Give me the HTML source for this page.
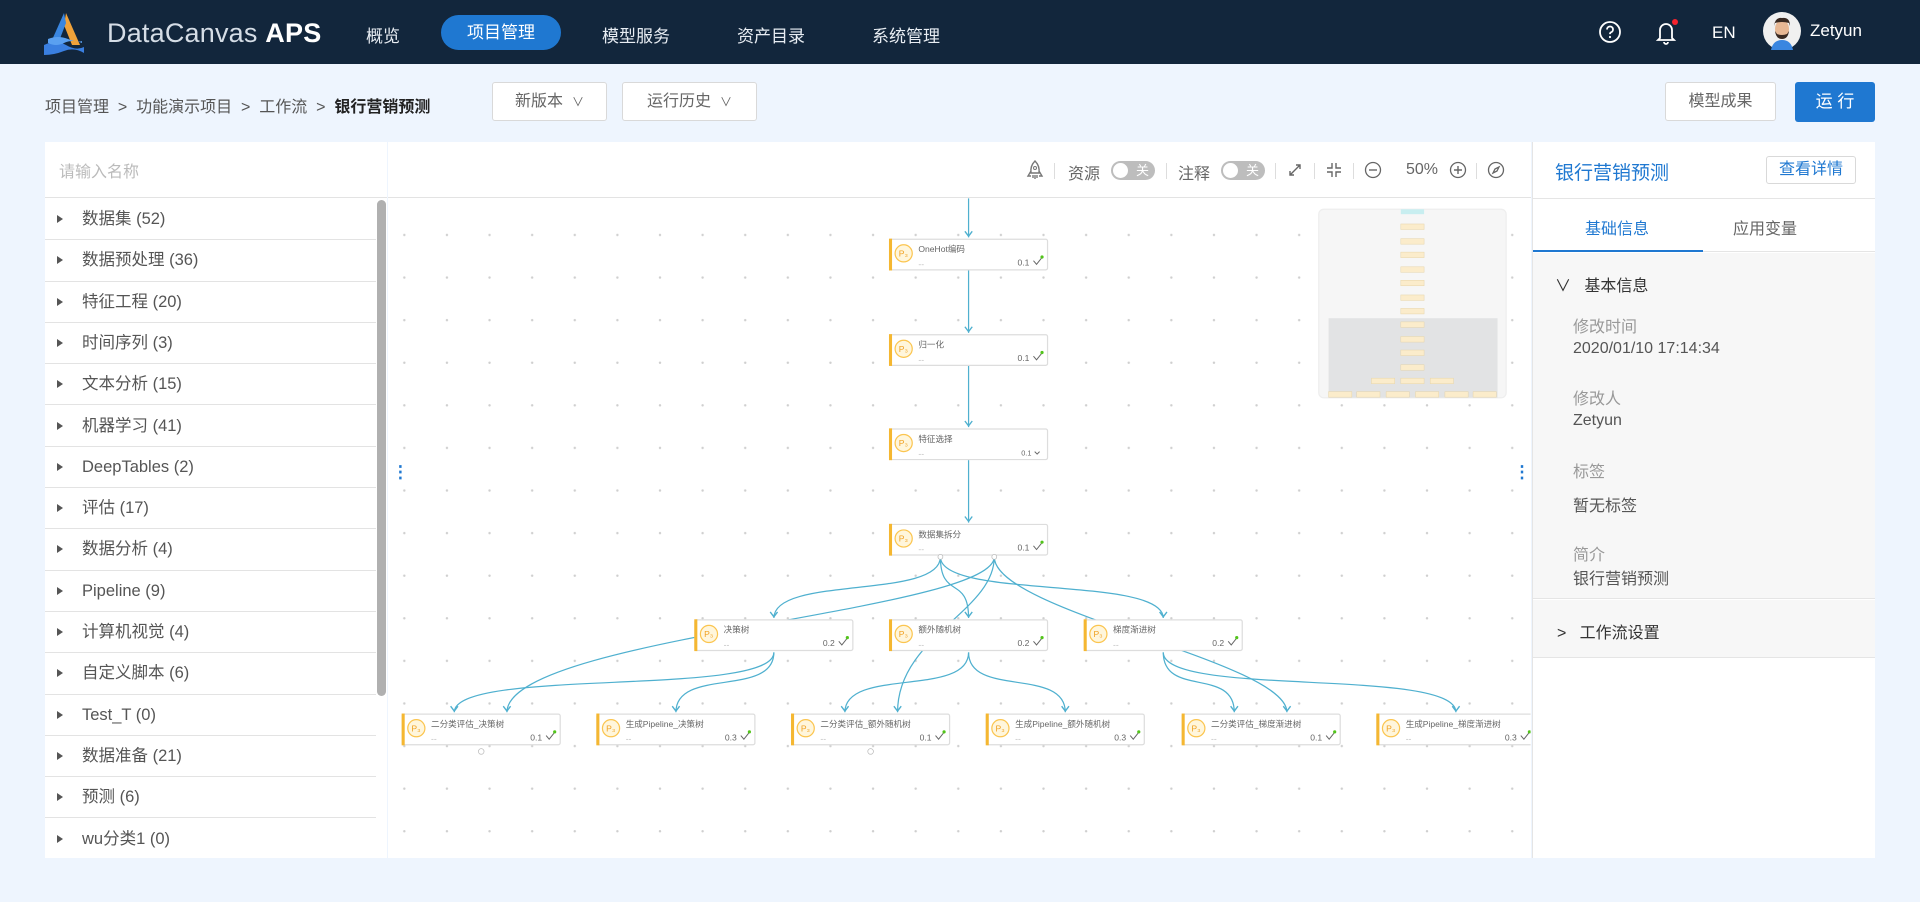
<!DOCTYPE html>
<html><head><meta charset="utf-8"><style>
*{box-sizing:border-box;margin:0;padding:0}
body{width:1920px;height:902px;background:#eef5fe;font-family:"Liberation Sans","Noto Sans CJK SC",sans-serif;position:relative;overflow:hidden;color:#333}
.abs{position:absolute}
.hdr{left:0;top:0;width:1920px;height:64px;background:#12263c}
.nav{color:#e8edf3;font-size:17px;top:22px}
.pill{left:441px;top:15px;width:120px;height:35px;border-radius:18px;background:#1f78d1;color:#fff;font-size:17px;text-align:center;line-height:35px}
.bc{top:93px;font-size:16px;color:#555}
.btn{background:#fff;border:1px solid #d9d9d9;border-radius:3px;font-size:16px;color:#666;text-align:center}
.left{left:45px;top:142px;width:342px;height:716px;background:#fff;overflow:hidden}
.item{position:absolute;left:0;width:331px;height:41.3px;border-bottom:1px solid #e3e3e3;font-size:16.5px;color:#555;line-height:41px;padding-left:37px}
.item:before{content:"";position:absolute;left:12px;top:16px;border-left:6px solid #555;border-top:4.5px solid transparent;border-bottom:4.5px solid transparent}
.canvas{left:388px;top:142px;width:1143px;height:716px;background:#fff}
.right{left:1532px;top:142px;width:343px;height:716px;background:#fff;border-left:1px solid #e5e5e5}
.tb{top:160px;font-size:16px;color:#666}
.tog{width:44px;height:19px;border-radius:10px;background:#bdbdbd;top:161px}
.tog:before{content:"";position:absolute;left:2px;top:2px;width:15px;height:15px;border-radius:50%;background:#fff}
.tog span{position:absolute;right:6px;top:0;font-size:13px;color:#fff;line-height:19px}
.sep{width:1px;height:16px;background:#ddd;top:163px}
.lbl{left:40px;font-size:16px;color:#999}
.val{left:40px;font-size:16px;color:#555}
</style></head><body>
<div class="abs hdr"></div>
<svg class="abs" style="left:44px;top:11px" width="40" height="45" viewBox="0 0 40 45">
<path d="M22 2 L36 34 L28 34 L20 14 Z" fill="#f0a23a"/>
<path d="M20 2 L4 38 L12 38 L22 12Z" fill="#3a86e0"/>
<path d="M0 34 Q12 28 22 34 T40 36 L40 42 Q30 36 20 40 T0 44Z" fill="#3a7fe0"/>
<path d="M4 28 Q14 24 24 28 T38 30 L38 32 Q28 28 20 32 T4 32Z" fill="#5aa0f0"/>
</svg>
<div class="abs" style="left:107px;top:18px;font-size:27px;color:#d5dde6;letter-spacing:0.2px">DataCanvas <b style="color:#fff">APS</b></div>
<div class="abs nav" style="left:366px">概览</div>
<div class="abs pill">项目管理</div>
<div class="abs nav" style="left:602px">模型服务</div>
<div class="abs nav" style="left:737px">资产目录</div>
<div class="abs nav" style="left:872px">系统管理</div>
<svg class="abs" style="left:1598px;top:20px" width="24" height="24" viewBox="0 0 24 24"><circle cx="12" cy="12" r="10" fill="none" stroke="#fff" stroke-width="1.8"/><path d="M9 9.5a3 3 0 1 1 4 2.8c-.8.4-1 1-1 1.8" fill="none" stroke="#fff" stroke-width="1.8"/><circle cx="12" cy="17" r="1.1" fill="#fff"/></svg>
<svg class="abs" style="left:1654px;top:18px" width="26" height="28" viewBox="0 0 26 28"><path d="M6 20V12a6 6 0 0 1 12 0v8l2 2H4z" fill="none" stroke="#fff" stroke-width="1.8"/><path d="M10 24a2 2 0 0 0 4 0" fill="none" stroke="#fff" stroke-width="1.8"/><circle cx="21" cy="4" r="3" fill="#f5222d"/></svg>
<div class="abs" style="left:1712px;top:23px;font-size:17px;color:#fff">EN</div>
<svg class="abs" style="left:1763px;top:12px" width="38" height="38" viewBox="0 0 38 38"><circle cx="19" cy="19" r="19" fill="#f0f0f0"/><path d="M8 38 Q10 28 19 28 Q28 28 30 38Z" fill="#3a86e0"/><ellipse cx="19" cy="17" rx="7" ry="9" fill="#e8b894"/><path d="M11 14 Q12 5 19 6 Q27 5 27 14 L26 11 Q19 9 12 11Z" fill="#3a2a22"/><path d="M12 19 Q13 27 19 27 Q25 27 26 19 L24 22 Q19 24 14 22Z" fill="#3a2a22"/></svg>
<div class="abs" style="left:1810px;top:21px;font-size:17px;color:#fff">Zetyun</div>

<div class="abs bc" style="left:45px">项目管理 &nbsp;&gt;&nbsp; 功能演示项目 &nbsp;&gt;&nbsp; 工作流 &nbsp;&gt;&nbsp; <b style="color:#222">银行营销预测</b></div>
<div class="abs btn" style="left:492px;top:82px;width:115px;height:39px;line-height:37px">新版本 &nbsp;<span style="font-size:12px">∨</span></div>
<div class="abs btn" style="left:622px;top:82px;width:135px;height:39px;line-height:37px">运行历史 &nbsp;<span style="font-size:12px">∨</span></div>
<div class="abs btn" style="left:1665px;top:82px;width:111px;height:39px;line-height:37px">模型成果</div>
<div class="abs" style="left:1795px;top:82px;width:80px;height:40px;line-height:40px;background:#1f78d1;color:#fff;border-radius:3px;text-align:center;font-size:17px">运 行</div>

<div class="abs left">
<div style="height:56px;border-bottom:1px solid #e3e3e3;padding:16px 14px;font-size:16px;color:#bbb">请输入名称</div>
<div class="item" style="top:57px">数据集 (52)</div>
<div class="item" style="top:98.3px">数据预处理 (36)</div>
<div class="item" style="top:139.6px">特征工程 (20)</div>
<div class="item" style="top:180.9px">时间序列 (3)</div>
<div class="item" style="top:222.2px">文本分析 (15)</div>
<div class="item" style="top:263.5px">机器学习 (41)</div>
<div class="item" style="top:304.8px">DeepTables (2)</div>
<div class="item" style="top:346.1px">评估 (17)</div>
<div class="item" style="top:387.4px">数据分析 (4)</div>
<div class="item" style="top:428.7px">Pipeline (9)</div>
<div class="item" style="top:470px">计算机视觉 (4)</div>
<div class="item" style="top:511.3px">自定义脚本 (6)</div>
<div class="item" style="top:552.6px">Test_T (0)</div>
<div class="item" style="top:593.9px">数据准备 (21)</div>
<div class="item" style="top:635.2px">预测 (6)</div>
<div class="item" style="top:676.5px">wu分类1 (0)</div>
<div class="abs" style="left:332px;top:58px;width:9px;height:496px;border-radius:5px;background:#b0b0b0"></div>
</div>

<div class="abs canvas"><div style="height:56px;border-bottom:1px solid #e3e3e3"></div></div>
<svg class="abs" style="left:1026px;top:160px" width="18" height="20" viewBox="0 0 18 20"><path d="M9 1 Q14 6 13 13 L5 13 Q4 6 9 1Z M5 11 L2 16 L5 16 M13 11 L16 16 L13 16 M7 15v3 M9 15v4 M11 15v3" fill="none" stroke="#777" stroke-width="1.4"/><circle cx="9" cy="8" r="1.5" fill="none" stroke="#777"/></svg>
<div class="abs sep" style="left:1054px"></div>
<div class="abs tb" style="left:1068px">资源</div>
<div class="abs tog" style="left:1111px"><span>关</span></div>
<div class="abs sep" style="left:1166px"></div>
<div class="abs tb" style="left:1178px">注释</div>
<div class="abs tog" style="left:1221px"><span>关</span></div>
<div class="abs sep" style="left:1275px"></div>
<svg class="abs" style="left:1287px;top:162px" width="16" height="16" viewBox="0 0 16 16"><path d="M3 13L13 3 M9 3h4v4 M3 9v4h4" fill="none" stroke="#666" stroke-width="1.4"/></svg>
<div class="abs sep" style="left:1314px"></div>
<svg class="abs" style="left:1326px;top:162px" width="16" height="16" viewBox="0 0 16 16"><path d="M6 1v5H1 M10 1v5h5 M6 15v-5H1 M10 15v-5h5" fill="none" stroke="#666" stroke-width="1.4"/></svg>
<div class="abs sep" style="left:1353px"></div>
<svg class="abs" style="left:1364px;top:161px" width="18" height="18" viewBox="0 0 18 18"><circle cx="9" cy="9" r="7.5" fill="none" stroke="#666" stroke-width="1.3"/><path d="M5 9h8" stroke="#666" stroke-width="1.4"/></svg>
<div class="abs tb" style="left:1406px;top:161px">50%</div>
<svg class="abs" style="left:1449px;top:161px" width="18" height="18" viewBox="0 0 18 18"><circle cx="9" cy="9" r="7.5" fill="none" stroke="#666" stroke-width="1.3"/><path d="M5 9h8M9 5v8" stroke="#666" stroke-width="1.4"/></svg>
<div class="abs sep" style="left:1476px"></div>
<svg class="abs" style="left:1487px;top:161px" width="18" height="18" viewBox="0 0 18 18"><circle cx="9" cy="9" r="7.5" fill="none" stroke="#666" stroke-width="1.3"/><path d="M12 6L10 10 6 12 8 8Z" fill="none" stroke="#666" stroke-width="1.3"/></svg>

<svg class="abs" style="left:0;top:0" width="1920" height="902" viewBox="0 0 1568 737" preserveAspectRatio="none">
<defs>
<clipPath id="cc"><rect x="317" y="162" width="933" height="539"/></clipPath>
<pattern id="dots" x="0" y="0" width="34.8" height="34.8" patternUnits="userSpaceOnUse"><circle cx="17" cy="18" r="1" fill="#cfcfcf"/></pattern>
<g id="icon"><circle cx="0" cy="0" r="7" fill="#fff6dc" stroke="#fbc54f" stroke-width="1"/><text x="-4" y="2.5" font-size="7" fill="#f0a020" font-family="Liberation Sans">P₃</text></g>
</defs>
<g clip-path="url(#cc)">
<rect x="317" y="162" width="933" height="539" fill="url(#dots)"/>
<g fill="none" stroke="#4fb0cf" stroke-width="1">
<path d="M791 162 V194 M791 221 C791 240 791 255 791 272 M791 299 C791 320 791 330 791 349 M791 376 C791 400 791 410 791 427"/>
<path d="M768 455 C768 490 632 470 632 505"/>
<path d="M768 455 C768 490 791 470 791 505"/>
<path d="M768 455 C768 490 950 470 950 505"/>
<path d="M812 455 C812 500 414 520 414 582"/>
<path d="M812 455 C812 500 733 520 733 582"/>
<path d="M812 455 C812 500 1051 540 1051 582"/>
<path d="M632 533 C632 570 371 545 371 582"/>
<path d="M632 533 C632 570 552 545 552 582"/>
<path d="M791 533 C791 570 690 545 690 582"/>
<path d="M791 533 C791 570 870 545 870 582"/>
<path d="M950 533 C950 570 1008 545 1008 582"/>
<path d="M950 533 C950 570 1189 545 1189 582"/>
</g>
<g fill="none" stroke="#4fb0cf" stroke-width="1.1">
<path d="M788 189l3 4 3-4 M788 267l3 4 3-4 M788 344l3 4 3-4 M788 422l3 4 3-4 M629 500l3 4 3-4 M788 500l3 4 3-4 M947 500l3 4 3-4 M368 577l3 4 3-4 M411 577l3 4 3-4 M549 577l3 4 3-4 M687 577l3 4 3-4 M730 577l3 4 3-4 M867 577l3 4 3-4 M1005 577l3 4 3-4 M1048 577l3 4 3-4 M1186 577l3 4 3-4"/>
</g>
<g font-family="Liberation Sans, Noto Sans CJK SC, sans-serif" font-size="7">
<g transform="translate(726,195)"><rect x="0.5" y="0.5" width="129" height="25" rx="1.5" fill="#fff" stroke="#ddd"/><rect x="0" y="0" width="2.5" height="26" fill="#f5b731"/><use href="#icon" x="12" y="12"/><text x="24" y="11" fill="#666">OneHot编码</text><text x="24" y="23" fill="#bbb">--</text><text x="105" y="22" fill="#666">0.1</text><path d="M118 18l2.5 3 4-5" fill="none" stroke="#666" stroke-width=".8"/><circle cx="125" cy="15" r="1.3" fill="#52c41a"/></g>
<g transform="translate(726,273)"><rect x="0.5" y="0.5" width="129" height="25" rx="1.5" fill="#fff" stroke="#ddd"/><rect width="2.5" height="26" fill="#f5b731"/><use href="#icon" x="12" y="12"/><text x="24" y="11" fill="#666">归一化</text><text x="24" y="23" fill="#bbb">--</text><text x="105" y="22" fill="#666">0.1</text><path d="M118 18l2.5 3 4-5" fill="none" stroke="#666" stroke-width=".8"/><circle cx="125" cy="15" r="1.3" fill="#52c41a"/></g>
<g transform="translate(726,350)"><rect x="0.5" y="0.5" width="129" height="25" rx="1.5" fill="#fff" stroke="#ddd"/><rect width="2.5" height="26" fill="#f5b731"/><use href="#icon" x="12" y="12"/><text x="24" y="11" fill="#666">特征选择</text><text x="24" y="23" fill="#bbb">--</text><text x="108" y="22" fill="#666" font-size="6">0.1</text><path d="M119 19l2 2 2-2" fill="none" stroke="#666" stroke-width=".8"/></g>
<g transform="translate(726,428)"><rect x="0.5" y="0.5" width="129" height="25" rx="1.5" fill="#fff" stroke="#ddd"/><rect width="2.5" height="26" fill="#f5b731"/><use href="#icon" x="12" y="12"/><text x="24" y="11" fill="#666">数据集拆分</text><text x="24" y="23" fill="#bbb">--</text><text x="105" y="22" fill="#666">0.1</text><path d="M118 18l2.5 3 4-5" fill="none" stroke="#666" stroke-width=".8"/><circle cx="125" cy="15" r="1.3" fill="#52c41a"/></g>
<g transform="translate(567,506)"><rect x="0.5" y="0.5" width="129" height="25" rx="1.5" fill="#fff" stroke="#ddd"/><rect width="2.5" height="26" fill="#f5b731"/><use href="#icon" x="12" y="12"/><text x="24" y="11" fill="#666">决策树</text><text x="24" y="23" fill="#bbb">--</text><text x="105" y="22" fill="#666">0.2</text><path d="M118 18l2.5 3 4-5" fill="none" stroke="#666" stroke-width=".8"/><circle cx="125" cy="15" r="1.3" fill="#52c41a"/></g>
<g transform="translate(726,506)"><rect x="0.5" y="0.5" width="129" height="25" rx="1.5" fill="#fff" stroke="#ddd"/><rect width="2.5" height="26" fill="#f5b731"/><use href="#icon" x="12" y="12"/><text x="24" y="11" fill="#666">额外随机树</text><text x="24" y="23" fill="#bbb">--</text><text x="105" y="22" fill="#666">0.2</text><path d="M118 18l2.5 3 4-5" fill="none" stroke="#666" stroke-width=".8"/><circle cx="125" cy="15" r="1.3" fill="#52c41a"/></g>
<g transform="translate(885,506)"><rect x="0.5" y="0.5" width="129" height="25" rx="1.5" fill="#fff" stroke="#ddd"/><rect width="2.5" height="26" fill="#f5b731"/><use href="#icon" x="12" y="12"/><text x="24" y="11" fill="#666">梯度渐进树</text><text x="24" y="23" fill="#bbb">--</text><text x="105" y="22" fill="#666">0.2</text><path d="M118 18l2.5 3 4-5" fill="none" stroke="#666" stroke-width=".8"/><circle cx="125" cy="15" r="1.3" fill="#52c41a"/></g>
<g transform="translate(328,583)"><rect x="0.5" y="0.5" width="129" height="25" rx="1.5" fill="#fff" stroke="#ddd"/><rect width="2.5" height="26" fill="#f5b731"/><use href="#icon" x="12" y="12"/><text x="24" y="11" fill="#666">二分类评估_决策树</text><text x="24" y="23" fill="#bbb">--</text><text x="105" y="22" fill="#666">0.1</text><path d="M118 18l2.5 3 4-5" fill="none" stroke="#666" stroke-width=".8"/><circle cx="125" cy="15" r="1.3" fill="#52c41a"/></g>
<g transform="translate(487,583)"><rect x="0.5" y="0.5" width="129" height="25" rx="1.5" fill="#fff" stroke="#ddd"/><rect width="2.5" height="26" fill="#f5b731"/><use href="#icon" x="12" y="12"/><text x="24" y="11" fill="#666">生成Pipeline_决策树</text><text x="24" y="23" fill="#bbb">--</text><text x="105" y="22" fill="#666">0.3</text><path d="M118 18l2.5 3 4-5" fill="none" stroke="#666" stroke-width=".8"/><circle cx="125" cy="15" r="1.3" fill="#52c41a"/></g>
<g transform="translate(646,583)"><rect x="0.5" y="0.5" width="129" height="25" rx="1.5" fill="#fff" stroke="#ddd"/><rect width="2.5" height="26" fill="#f5b731"/><use href="#icon" x="12" y="12"/><text x="24" y="11" fill="#666">二分类评估_额外随机树</text><text x="24" y="23" fill="#bbb">--</text><text x="105" y="22" fill="#666">0.1</text><path d="M118 18l2.5 3 4-5" fill="none" stroke="#666" stroke-width=".8"/><circle cx="125" cy="15" r="1.3" fill="#52c41a"/></g>
<g transform="translate(805,583)"><rect x="0.5" y="0.5" width="129" height="25" rx="1.5" fill="#fff" stroke="#ddd"/><rect width="2.5" height="26" fill="#f5b731"/><use href="#icon" x="12" y="12"/><text x="24" y="11" fill="#666">生成Pipeline_额外随机树</text><text x="24" y="23" fill="#bbb">--</text><text x="105" y="22" fill="#666">0.3</text><path d="M118 18l2.5 3 4-5" fill="none" stroke="#666" stroke-width=".8"/><circle cx="125" cy="15" r="1.3" fill="#52c41a"/></g>
<g transform="translate(965,583)"><rect x="0.5" y="0.5" width="129" height="25" rx="1.5" fill="#fff" stroke="#ddd"/><rect width="2.5" height="26" fill="#f5b731"/><use href="#icon" x="12" y="12"/><text x="24" y="11" fill="#666">二分类评估_梯度渐进树</text><text x="24" y="23" fill="#bbb">--</text><text x="105" y="22" fill="#666">0.1</text><path d="M118 18l2.5 3 4-5" fill="none" stroke="#666" stroke-width=".8"/><circle cx="125" cy="15" r="1.3" fill="#52c41a"/></g>
<g transform="translate(1124,583)"><rect x="0.5" y="0.5" width="129" height="25" rx="1.5" fill="#fff" stroke="#ddd"/><rect width="2.5" height="26" fill="#f5b731"/><use href="#icon" x="12" y="12"/><text x="24" y="11" fill="#666">生成Pipeline_梯度渐进树</text><text x="24" y="23" fill="#bbb">--</text><text x="105" y="22" fill="#666">0.3</text><path d="M118 18l2.5 3 4-5" fill="none" stroke="#666" stroke-width=".8"/><circle cx="125" cy="15" r="1.3" fill="#52c41a"/></g>
</g>
<g fill="#fff" stroke="#bbb" stroke-width=".6"><circle cx="768" cy="455" r="2"/><circle cx="812" cy="455" r="2"/><circle cx="393" cy="614" r="2.3"/><circle cx="711" cy="614" r="2.3"/></g>
<rect x="1077" y="171" width="153" height="154" rx="4" fill="#f6f6f6" stroke="#eee"/>
<rect x="1085" y="260" width="138" height="65" fill="#e2e3e4"/>
<g fill="#fbeccb" stroke="#e6d4a8" stroke-width=".4">
<rect x="1144" y="171" width="19" height="4" fill="#c8eef0" stroke="none"/>
<rect x="1144" y="183" width="19" height="4.5"/><rect x="1144" y="195" width="19" height="4.5"/><rect x="1144" y="206" width="19" height="4.5"/><rect x="1144" y="218" width="19" height="4.5"/><rect x="1144" y="229" width="19" height="4.5"/><rect x="1144" y="241" width="19" height="4.5"/><rect x="1144" y="252" width="19" height="4.5"/><rect x="1144" y="263" width="19" height="4.5"/><rect x="1144" y="275" width="19" height="4.5"/><rect x="1144" y="286" width="19" height="4.5"/><rect x="1144" y="298" width="19" height="4.5"/>
<rect x="1120" y="309" width="19" height="4.5"/><rect x="1144" y="309" width="19" height="4.5"/><rect x="1168" y="309" width="19" height="4.5"/>
<rect x="1085" y="320" width="19" height="4.5"/><rect x="1108" y="320" width="19" height="4.5"/><rect x="1132" y="320" width="19" height="4.5"/><rect x="1156" y="320" width="19" height="4.5"/><rect x="1180" y="320" width="19" height="4.5"/><rect x="1203" y="320" width="19" height="4.5"/>
</g>
</g>
<text x="320" y="390" font-size="14" fill="#1f78d1" font-weight="bold">⋮</text>
<text x="1236" y="390" font-size="14" fill="#1f78d1" font-weight="bold">⋮</text>
</svg>

<div class="abs right">
<div class="abs" style="left:22px;top:16px;font-size:19px;color:#1f78d1">银行营销预测</div>
<div class="abs btn" style="left:233px;top:14px;width:90px;height:28px;line-height:26px;font-size:16px;color:#1f78d1">查看详情</div>
<div class="abs" style="left:0;top:56px;width:342px;height:54px;border-top:1px solid #e5e5e5;border-bottom:1px solid #e5e5e5"></div>
<div class="abs" style="left:52px;top:73px;font-size:16px;color:#1f78d1">基础信息</div>
<div class="abs" style="left:200px;top:73px;font-size:16px;color:#666">应用变量</div>
<div class="abs" style="left:0;top:108px;width:170px;height:2px;background:#1f78d1"></div>
<div class="abs" style="left:0;top:111px;width:342px;height:346px;background:#f7f7f7;border-bottom:1px solid #e5e5e5"></div>
<div class="abs" style="left:22px;top:130px;font-size:16px;color:#333">∨&nbsp;&nbsp; 基本信息</div>
<div class="abs lbl" style="top:171px">修改时间</div>
<div class="abs val" style="top:198px">2020/01/10 17:14:34</div>
<div class="abs lbl" style="top:243px">修改人</div>
<div class="abs val" style="top:270px">Zetyun</div>
<div class="abs lbl" style="top:316px">标签</div>
<div class="abs val" style="top:350px">暂无标签</div>
<div class="abs lbl" style="top:399px">简介</div>
<div class="abs val" style="top:423px">银行营销预测</div>
<div class="abs" style="left:0;top:458px;width:342px;height:58px;background:#f7f7f7;border-bottom:1px solid #e5e5e5"></div>
<div class="abs" style="left:24px;top:477px;font-size:16px;color:#333">&gt;&nbsp;&nbsp; 工作流设置</div>
</div>
</body></html>
